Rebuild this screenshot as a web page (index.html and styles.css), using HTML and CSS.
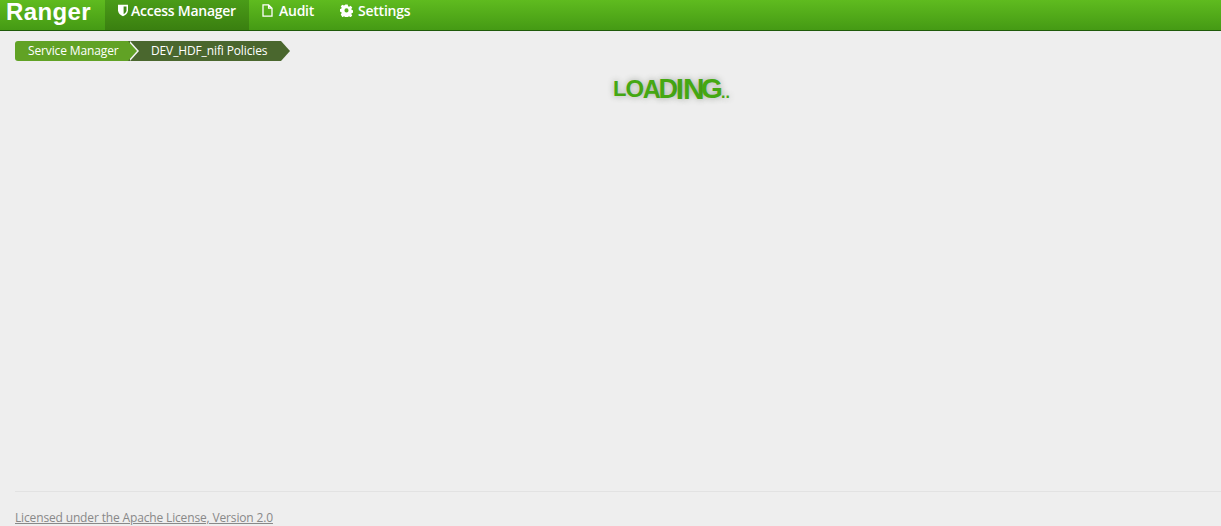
FILE: index.html
```html
<!DOCTYPE html>
<html lang="en">
  <head>
    <meta charset="UTF-8" />
    <title>Ranger</title>
    <link rel="stylesheet" href="styles.css">
  </head>
  <body>
    <header class="navbar">
      <a class="brand" href="#">Ranger</a>
      <nav class="nav-items">
        <a class="nav-item active" href="#">
          <svg class="icon shield" viewBox="0 0 12 13"><path d="M1 .8h10v5.400c0 3-2.400 4.900-5 6-2.600-1.100-5-3-5-6z" fill="#fff"/><path d="M6.600 2.400h2.900v3.800c0 1.800-1.300 3-2.900 3.900z" fill="#3f8a14"/></svg>
          <span>Access Manager</span>
        </a>
        <a class="nav-item audit" href="#">
          <svg class="icon" viewBox="0 0 11 13"><path d="M1 .8h5.600L10 4.200v8H1z M6.600 .8v3.400H10" fill="none" stroke="#fff" stroke-width="1.300"/></svg>
          <span>Audit</span>
        </a>
        <a class="nav-item settings" href="#">
          <svg class="icon" viewBox="0 0 14 14"><path fill-rule="evenodd" fill="#fff" d="M5.700.6h2.600l.4 1.800 1.100.5 1.600-1 1.800 1.800-1 1.600.5 1.100 1.700.4v2.600l-1.700.4-.5 1.100 1 1.600-1.800 1.800-1.600-1-1.100.5-.4 1.800H5.700l-.4-1.800-1.100-.5-1.600 1L.8 11.300l1-1.600-.5-1.100L-.4 8.200V5.600l1.700-.4.500-1.100-1-1.600L2.600.7l1.600 1 1.100-.5zM7 4.700a2.200 2.200 0 1 0 0 4.400 2.200 2.200 0 0 0 0-4.400z"/></svg>
          <span>Settings</span>
        </a>
      </nav>
    </header>

    <main class="content">
      <ul class="breadcrumb">
        <li class="crumb first"><a href="#">Service Manager</a></li>
        <li class="crumb last"><a href="#">DEV_HDF_nifi Policies</a></li>
      </ul>
      <div class="loading"><span class="l1">L</span><span class="l2">O</span><span class="l3">A</span><span class="l4">D</span><span class="l5">I</span><span class="l6">N</span><span class="l7">G</span><span class="l8">.</span><span class="l9">.</span></div>
    </main>

    <footer class="footer">
      <a href="#">Licensed under the Apache License, Version 2.0</a>
    </footer>
  </body>
</html>
```

FILE: styles.css
```css
* {
  box-sizing: border-box;
}
html, body {
  height: 100%;
}
body {
  margin: 0;
  height: 526px;
  overflow: hidden;
  display: flex;
  flex-direction: column;
  background: #eee;
  font-family: "Open Sans", sans-serif;
  color: #555;
}
a {
  text-decoration: none;
}
.navbar {
  display: flex;
  height: 31px;
  flex: none;
  background: linear-gradient(to bottom, #5fbb1f, #459a14);
  border-bottom: 1px solid #1f5a0a;
}
.brand {
  width: 105px;
  padding-left: 6px;
  font-family: "Liberation Sans", Arial, sans-serif;
  font-size: 24px;
  font-weight: bold;
  line-height: 24px;
  color: #fff;
  letter-spacing: 0.4px;
}
.nav-items {
  display: flex;
}
.nav-item {
  display: flex;
  align-items: center;
  height: 30px;
  padding: 0 13px 9px;
  font-size: 14px;
  font-weight: 600;
  letter-spacing: -0.25px;
  color: #fff;
  white-space: nowrap;
}
.nav-item.active {
  width: 144px;
  padding-left: 12px;
  background: linear-gradient(to bottom, #4a9c18, #3a7f10);
}
.icon {
  flex: none;
  display: block;
}
.shield {
  width: 12px;
  height: 13px;
  margin-right: 2px;
}
.audit .icon {
  width: 11px;
  height: 13px;
  margin-right: 6px;
}
.settings .icon {
  width: 13px;
  height: 13px;
  margin-right: 5px;
}
.content {
  flex: 1;
  padding: 10px 15px 0;
}
.breadcrumb {
  display: flex;
  margin: 0;
  padding: 0;
  list-style: none;
  font-size: 12px;
  line-height: 20px;
  letter-spacing: -0.13px;
}
.crumb {
  position: relative;
  height: 20px;
}
.crumb a {
  color: #fff;
}
.crumb::after {
  content: "";
  position: absolute;
  top: 0;
  right: -9px;
  border-top: 10px solid transparent;
  border-bottom: 10px solid transparent;
  border-left: 9px solid;
}
.crumb.first {
  z-index: 2;
  width: 113px;
  padding-left: 13px;
  background: #61a225;
  border-radius: 3px 0 0 3px;
}
.crumb.first::after {
  border-left-color: #61a225;
  filter: drop-shadow(2px 0 0 #f4f4f4);
}
.crumb.last {
  width: 153px;
  padding-left: 23px;
  background: #4a672e;
}
.crumb.last::after {
  border-left-color: #4a672e;
}
.loading {
  display: flex;
  align-items: center;
  width: 118px;
  height: 30px;
  margin: 13px 0 0 598px;
  line-height: 30px;
  font-family: "Liberation Sans", Arial, sans-serif;
  font-weight: bold;
  color: #45a812;
  text-shadow: 0 0 6px rgba(60, 70, 50, 0.45);
  white-space: nowrap;
}
.l1 { font-size: 22px; letter-spacing: -1px; }
.l2 { font-size: 24px; letter-spacing: -1.500px; }
.l3 { font-size: 25px; letter-spacing: -2.200px; }
.l4 { font-size: 27px; letter-spacing: -2.200px; }
.l5 { font-size: 30px; letter-spacing: -1.200px; }
.l6 { font-size: 30px; letter-spacing: -3.500px; }
.l7 { font-size: 28px; letter-spacing: -2px; }
.l8 { font-size: 16px; letter-spacing: 0.2px; padding-top: 8px; }
.l9 { font-size: 16px; padding-top: 8px; }
.footer {
  flex: none;
  height: 35px;
  margin-left: 15px;
  padding-top: 17px;
  border-top: 1px solid #e2e2e2;
  font-size: 12px;
  line-height: 17px;
  letter-spacing: -0.15px;
}
.footer a {
  color: #888;
  text-decoration: underline;
}
```
